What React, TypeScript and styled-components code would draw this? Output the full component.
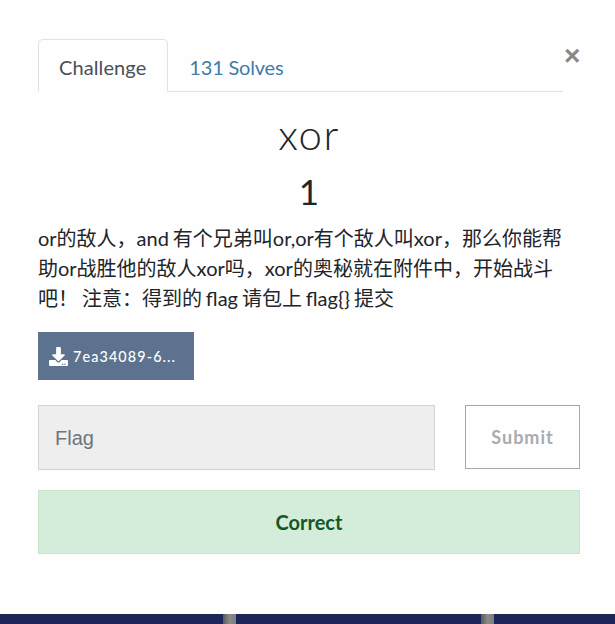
import React from 'react'

import { FaDownload } from 'react-icons/fa'
import styled, { createGlobalStyle } from 'styled-components'

const GlobalStyle = createGlobalStyle`
  html, body {
    margin: 0;
    padding: 0;
    background: #fefefe;
  }
  * {
    box-sizing: border-box;
  }
`

export default function App() {
  return (
    <Page>
      <GlobalStyle />
      <Modal>
        <Header>
          <Tabs>
            <Tab $active>Challenge</Tab>
            <Tab>131 Solves</Tab>
          </Tabs>
          <Close>×</Close>
        </Header>

        <Title>xor</Title>
        <Value>1</Value>

        <Description>
          or的敌人，and 有个兄弟叫or,or有个敌人叫xor，那么你能帮助or战胜他的敌人xor吗，xor的奥秘就在附件中，开始战斗吧！ 注意：得到的 flag 请包上 flag{'{}'} 提交
        </Description>

        <FileButton>
          <FaDownload size={19} />
          <FileName>7ea34089-6...</FileName>
        </FileButton>

        <SubmitRow>
          <FlagInput placeholder={'Flag'} />
          <SubmitButton>Submit</SubmitButton>
        </SubmitRow>

        <Notice>Correct</Notice>
      </Modal>

      <BottomStrip>
        <StripGap />
        <StripGap />
      </BottomStrip>
    </Page>
  )
}

const Page = styled.div`
  display: flex;
  flex-direction: column;
  justify-content: space-between;
  width: 615px;
  height: 624px;
  overflow: hidden;
  font-family: Lato, 'Noto Sans CJK SC', sans-serif;
  color: #212529;
`

const Modal = styled.div`
  display: flex;
  flex-direction: column;
  padding: 39px 35px 0 38px;
`

const Header = styled.div`
  display: flex;
  align-items: flex-start;
`

const Tabs = styled.div`
  display: flex;
  width: 525px;
  height: 53px;
  border-bottom: 1px solid #dee2e6;
`

const Tab = styled.div<{ $active?: boolean }>`
  height: 53px;
  padding: 13px 21px 0 20px;
  font-size: 20px;
  line-height: 28px;
  letter-spacing: ${props => (props.$active ? '0.1px' : '-0.2px')};
  border: 1px solid ${props => (props.$active ? '#dee2e6' : 'transparent')};
  border-bottom: ${props => (props.$active ? '1px solid #fefefe' : 'none')};
  border-radius: 5px 5px 0 0;
  color: ${props => (props.$active ? '#495057' : '#3f7cac')};
`

const Close = styled.div`
  width: 16px;
  height: 32px;
  margin-left: auto;
  font-family: 'Liberation Sans', sans-serif;
  font-size: 28px;
  font-weight: 700;
  line-height: 34px;
  color: #888;
`

const Title = styled.h1`
  margin: 18px 0 0;
  text-align: center;
  font-size: 42px;
  font-weight: 300;
  line-height: 48px;
  letter-spacing: 1.5px;
`

const Value = styled.h3`
  margin: 12px 0 0;
  text-align: center;
  font-size: 35px;
  font-weight: 400;
  line-height: 42px;
`

const Description = styled.p`
  margin: 11px 0 0;
  width: 530px;
  font-size: 20px;
  line-height: 30px;
  word-spacing: -1.2px;
`

const FileButton = styled.div`
  display: flex;
  align-items: center;
  gap: 5px;
  width: 156px;
  height: 48px;
  margin-top: 19px;
  padding-left: 11px;
  background: #5c728f;
  color: #fff;
`

const FileName = styled.span`
  font-size: 14.4px;
  font-weight: 500;
  letter-spacing: 1.1px;
`

const SubmitRow = styled.div`
  display: flex;
  justify-content: space-between;
  align-items: flex-start;
  margin-top: 25px;
`

const FlagInput = styled.input`
  width: 397px;
  height: 65px;
  padding: 2px 16px 0;
  background: #eee;
  border: 1px solid #ced4da;
  border-radius: 0;
  outline: none;
  font-family: 'Liberation Sans', sans-serif;
  font-size: 20px;

  &::placeholder {
    color: #6c757d;
    opacity: 1;
  }
`

const SubmitButton = styled.button`
  width: 115px;
  height: 64px;
  padding: 0;
  background: transparent;
  border: 1px solid #a3a6ad;
  border-radius: 0;
  font-family: Lato, sans-serif;
  font-size: 18px;
  font-weight: 700;
  letter-spacing: 1px;
  color: #a8abb2;
`

const Notice = styled.div`
  display: flex;
  justify-content: center;
  align-items: center;
  height: 64px;
  margin-top: 20px;
  background: #d4edda;
  border: 1px solid #c3e6cb;
  font-size: 20px;
  font-weight: 700;
  color: #155724;
`

const BottomStrip = styled.div`
  display: flex;
  gap: 245px;
  height: 10px;
  padding-left: 223px;
  background: #1e2659;
`

const StripGap = styled.div`
  width: 13px;
  background: linear-gradient(to right, #5a5a5a, #8a8a8a 50%, #7d7d7d);
`
